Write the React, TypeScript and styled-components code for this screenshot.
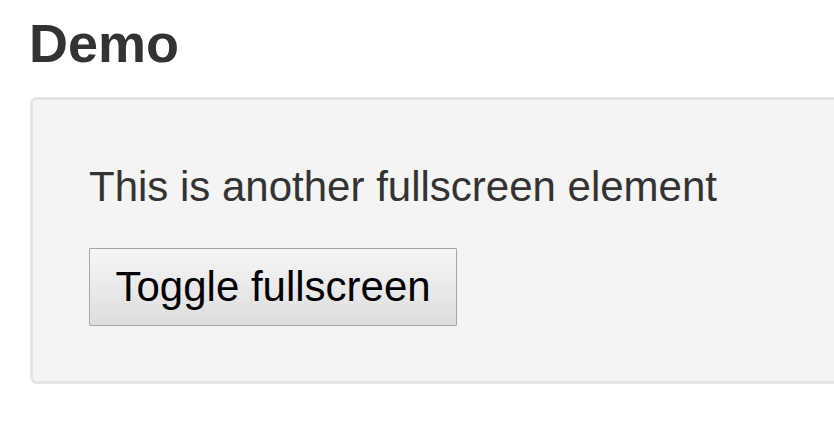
import React from 'react';
import styled, { createGlobalStyle } from 'styled-components';

const GlobalStyle = createGlobalStyle`
  html, body {
    margin: 0;
    padding: 0;
    background: #fff;
    overflow: hidden;
  }
  body {
    font-family: 'Liberation Sans', Arial, sans-serif;
    color: #333;
  }
`;

const Page = styled.div`
  padding: 13px 0 0 30px;
`;

const Title = styled.h1`
  margin: 0 0 24px -1px;
  font-size: 54px;
  line-height: 60px;
  font-weight: bold;
  color: #333;
`;

const Panel = styled.div`
  width: 900px;
  box-sizing: border-box;
  padding: 56px 56px 55px;
  background: #f4f4f4;
  border: 3px solid #e4e4e4;
  border-radius: 7px;
`;

const Text = styled.p`
  margin: 0 0 31px;
  font-size: 42px;
  line-height: 61px;
  color: #333;
`;

const Button = styled.button`
  display: block;
  box-sizing: border-box;
  height: 78px;
  padding: 0 25.5px;
  font-family: 'Liberation Sans', Arial, sans-serif;
  font-size: 42px;
  line-height: 48px;
  color: #000;
  background: linear-gradient(#f6f6f6, #dddddd);
  border: 1px solid #a6a6a6;
  border-radius: 1px;
`;

export default function App() {
  return (
    <Page>
      <GlobalStyle />
      <Title>Demo</Title>
      <Panel>
        <Text>This is another fullscreen element</Text>
        <Button>Toggle fullscreen</Button>
      </Panel>
    </Page>
  );
}
